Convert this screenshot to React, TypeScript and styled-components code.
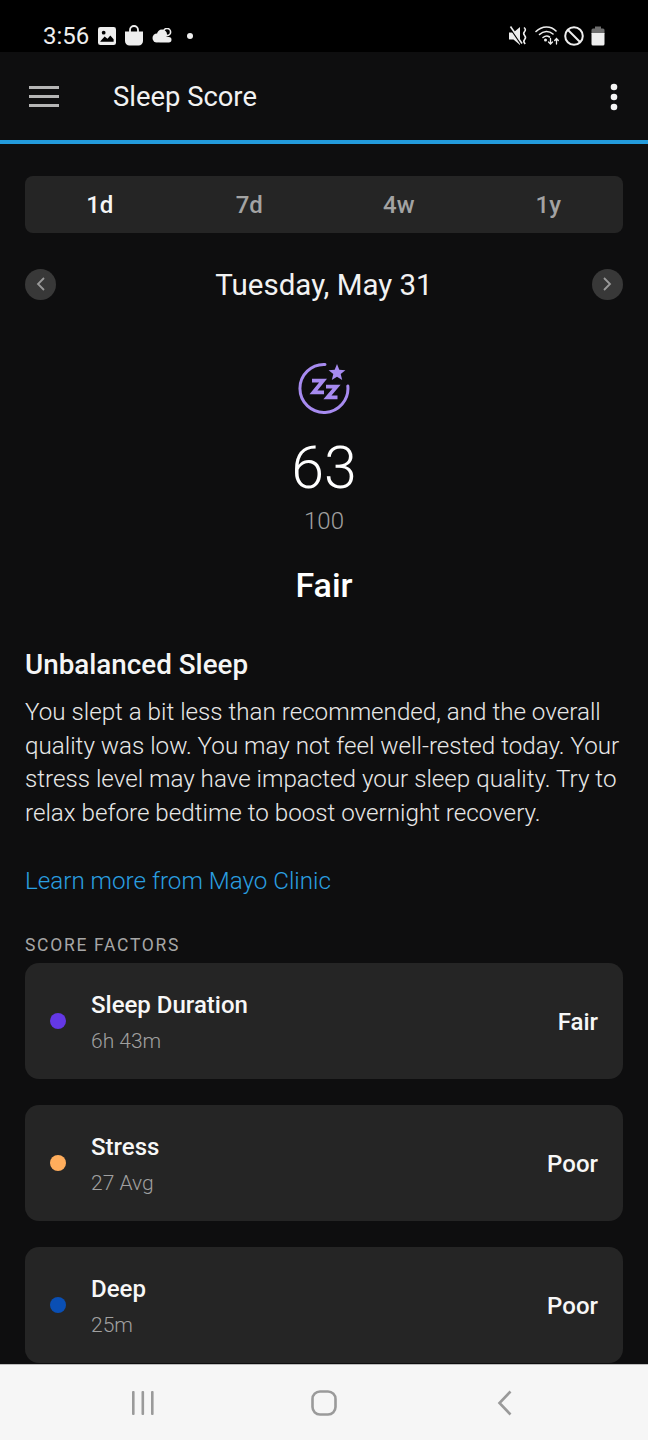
import { FC } from 'react';
import styled, { createGlobalStyle } from 'styled-components';

const GlobalStyle = createGlobalStyle`
  html, body {
    margin: 0;
    padding: 0;
    background: #0e0e0f;
  }
  * {
    box-sizing: border-box;
  }
`;

const Screen = styled.div`
  display: flex;
  flex-flow: column nowrap;
  width: 648px;
  height: 1440px;
  overflow: hidden;
  background: #0e0e0f;
  color: #ffffff;
  font-family: Roboto, 'Liberation Sans', sans-serif;
`;

const StatusBar = styled.div`
  display: flex;
  align-items: center;
  justify-content: space-between;
  flex: 0 0 52px;
  padding: 0 43px 0 43px;
  background: #000000;
  color: #eeeeee;
`;

const StatusGroup = styled.div`
  display: flex;
  align-items: center;
  gap: 8px;
  padding-top: 19px;
`;

const Time = styled.span`
  font-size: 24px;
  line-height: 32px;
  font-weight: 400;
  margin-right: 1px;
`;

const AppBar = styled.header`
  display: flex;
  align-items: center;
  flex: 0 0 92px;
  padding: 1px 30px 0 29px;
  border-bottom: 4px solid #239bdc;
`;

const Title = styled.h1`
  flex: 1;
  margin: 0 0 0 54px;
  font-size: 27.4px;
  line-height: 34px;
  font-weight: 400;
  color: #f2f2f2;
`;

const Content = styled.main`
  flex: 1;
  min-height: 0;
  overflow: hidden;
  padding: 32px 25px 0;
`;

const Tabs = styled.div`
  display: grid;
  grid-template-columns: repeat(4, 1fr);
  height: 57px;
  border-radius: 8px;
  background: #252525;
`;

const Tab = styled.div<{ $active?: boolean }>`
  display: flex;
  align-items: center;
  justify-content: center;
  font-size: 24px;
  font-weight: 500;
  color: ${(p) => (p.$active ? '#f5f5f5' : '#a3a3a3')};
`;

const DateRow = styled.div`
  display: flex;
  align-items: center;
  justify-content: space-between;
  height: 32px;
  margin-top: 35px;
`;

const DateLabel = styled.span`
  padding-top: 1px;
  font-size: 29.5px;
  line-height: 34px;
  font-weight: 400;
  color: #f2f2f2;
`;

const RoundButton = styled.div`
  display: flex;
  align-items: center;
  justify-content: center;
  width: 31px;
  height: 31px;
  border-radius: 50%;
  background: #383838;
`;

const ScoreBlock = styled.section`
  display: flex;
  flex-flow: column nowrap;
  align-items: center;
  margin-top: 62px;
`;

const ScoreValue = styled.div`
  margin-top: 19px;
  font-size: 59px;
  line-height: 70px;
  font-weight: 300;
`;

const ScoreMax = styled.div`
  margin-top: 2px;
  font-size: 24px;
  line-height: 32px;
  font-weight: 300;
  color: #a0a0a0;
`;

const ScoreLabel = styled.div`
  margin-top: 28px;
  font-size: 34px;
  line-height: 40px;
  font-weight: 500;
`;

const Heading = styled.h2`
  margin: 43px 0 0;
  font-size: 27.8px;
  line-height: 34px;
  font-weight: 500;
  color: #f5f5f5;
`;

const Body = styled.p`
  margin: 14px 0 0;
  font-size: 24.2px;
  line-height: 33.6px;
  font-weight: 300;
  color: #e8e8e8;
`;

const LearnMore = styled.a`
  display: block;
  margin-top: 34px;
  font-size: 24.2px;
  line-height: 34px;
  font-weight: 300;
  color: #2a9fe0;
`;

const SectionLabel = styled.div`
  margin-top: 37px;
  font-size: 17.5px;
  line-height: 20px;
  font-weight: 400;
  letter-spacing: 1.7px;
  color: #a6a6a6;
`;

const FactorList = styled.div`
  display: flex;
  flex-flow: column nowrap;
  gap: 26px;
  margin-top: 8px;
`;

const FactorCard = styled.div`
  display: flex;
  align-items: center;
  flex: 0 0 116px;
  padding: 0 25px;
  border-radius: 14px;
  background: #252525;
`;

const Dot = styled.span<{ $color: string }>`
  flex: 0 0 16px;
  height: 16px;
  border-radius: 50%;
  background: ${(p) => p.$color};
`;

const FactorText = styled.div`
  display: flex;
  flex-flow: column nowrap;
  flex: 1;
  gap: 5px;
  margin: 4px 0 0 25px;
`;

const FactorName = styled.span`
  font-size: 24px;
  line-height: 31px;
  font-weight: 500;
  color: #f7f7f7;
`;

const FactorDetail = styled.span`
  font-size: 21px;
  line-height: 30px;
  font-weight: 300;
  color: #a0a0a0;
`;

const FactorRating = styled.span`
  margin-top: 2px;
  font-size: 24px;
  line-height: 30px;
  font-weight: 500;
  color: #f7f7f7;
`;

const NavBar = styled.nav`
  display: grid;
  grid-template-columns: repeat(3, 181px);
  justify-content: center;
  justify-items: center;
  align-items: center;
  flex: 0 0 76px;
  border-top: 1px solid #bdbdbd;
  background: #f6f6f6;
`;

const MuteSvg = styled.svg`
  margin-right: -1px;
`;

const WifiSvg = styled.svg`
  margin-right: -4px;
`;

const BlockSvg = styled.svg`
  margin-right: -1px;
`;

const Hamburger = () => (
  <svg width="30" height="22" viewBox="0 0 30 22" fill="#b5b5b5">
    <rect y="0" width="30" height="3" />
    <rect y="9" width="30" height="3" />
    <rect y="18" width="30" height="3" />
  </svg>
);

const Kebab = () => (
  <svg width="8" height="28" viewBox="0 0 8 28" fill="#f5f5f5">
    <circle cx="4" cy="4" r="3.3" />
    <circle cx="4" cy="14" r="3.3" />
    <circle cx="4" cy="24" r="3.3" />
  </svg>
);

const ImageIcon = () => (
  <svg width="18" height="18" viewBox="0 0 19 19">
    <rect width="19" height="19" rx="2.5" fill="#eeeeee" />
    <circle cx="6" cy="6" r="2" fill="#000" />
    <path d="M2.5 15 L7 10 L10 12.5 L13 9 L16.5 13 V15.5 H2.5 Z" fill="#000" />
  </svg>
);

const BagIcon = () => (
  <svg width="20" height="21" viewBox="0 0 20 21">
    <path d="M6 7 V5 a4 4 0 0 1 8 0 V7" fill="none" stroke="#eee" strokeWidth="1.8" />
    <path d="M1 6.5 H19 V16 a4.5 4.5 0 0 1 -4.5 4.5 H5.5 A4.5 4.5 0 0 1 1 16 Z" fill="#eee" />
  </svg>
);

const CloudIcon = () => (
  <svg width="20" height="15" viewBox="0 0 20 15" fill="#eee">
    <circle cx="5" cy="10" r="4.5" />
    <circle cx="10" cy="6.5" r="5" />
    <rect x="5" y="9" width="14.5" height="5.5" rx="2.7" />
    <circle cx="15" cy="4" r="3.6" fill="none" stroke="#eee" strokeWidth="1.6" />
  </svg>
);

const MuteIcon = () => (
  <MuteSvg width="19" height="20" viewBox="0 0 19 20" fill="none">
    <path d="M0 6.5 H4.5 L11 1 V19 L4.5 13.5 H0 Z" fill="#eee" />
    <path d="M0.5 1 L12 18" stroke="#000" strokeWidth="1.6" />
    <path d="M1.5 0.5 L13 17.5" stroke="#eee" strokeWidth="1.6" />
    <path d="M15 1.5 q2.4 2 0.6 4 q-1.8 2 0 4 q1.8 2 0 4 q-1.8 2 0.6 4.5" stroke="#eee" strokeWidth="1.6" />
  </MuteSvg>
);

const WifiIcon = () => (
  <WifiSvg width="25" height="19" viewBox="0 0 25 19" fill="none" stroke="#eee" strokeWidth="1.6" strokeLinecap="round">
    <path d="M1 5.5 C7 -0.5 16 -0.5 21 5" />
    <path d="M4.5 8.5 C8.5 4.5 14 4.5 18 8" />
    <path d="M8 11.5 C10.5 9.5 12.5 9.5 14.5 11" />
    <circle cx="10.5" cy="14" r="0.7" fill="#eee" />
    <path d="M15.5 12.5 V18 M13.5 16 L15.5 18 L17.5 16" strokeWidth="1.3" />
    <path d="M21.5 18 V12.5 M19.7 14.5 L21.5 12.5 L23.3 14.5" strokeWidth="1.3" />
  </WifiSvg>
);

const BlockIcon = () => (
  <BlockSvg width="20" height="20" viewBox="0 0 20 20" fill="none" stroke="#eee" strokeWidth="2">
    <circle cx="10" cy="10" r="8.8" />
    <path d="M4 4 L16 16" />
  </BlockSvg>
);

const BatteryIcon = () => (
  <svg width="14" height="20" viewBox="0 0 14 20">
    <path d="M4 0.5 H10 V2.5 H12 a1.5 1.5 0 0 1 1.5 1.5 V8 H0.5 V4 A1.5 1.5 0 0 1 2 2.5 H4 Z" fill="#6e6e6e" />
    <path d="M0.5 7 H13.5 V18 a1.5 1.5 0 0 1 -1.5 1.5 H2 A1.5 1.5 0 0 1 0.5 18 Z" fill="#eee" />
  </svg>
);

const SleepIcon = () => (
  <svg width="52" height="52" viewBox="0 0 52 52" fill="none">
    <path d="M27 2.5 A24 24 0 1 0 49.8 24" stroke="#a78bf0" strokeWidth="3" strokeLinecap="round" />
    <path d="M39 2 L41.3 7.8 L47.4 8.2 L42.7 12.1 L44.2 18 L39 14.7 L33.8 18 L35.3 12.1 L30.6 8.2 L36.7 7.8 Z" fill="#a78bf0" />
    <path d="M14 18.7 H25 L15.5 30.3 H26" stroke="#a78bf0" strokeWidth="3.8" />
    <path d="M28 24.7 H38.5 L29.5 35.3 H39.5" stroke="#a78bf0" strokeWidth="3.8" />
  </svg>
);

const Chevron: FC<{ dir: 'left' | 'right' }> = ({ dir }) => (
  <svg width="10" height="14" viewBox="0 0 10 14" fill="none" stroke="#9a9a9a" strokeWidth="1.8">
    <path d={dir === 'left' ? 'M8 1 L2 7 L8 13' : 'M2 1 L8 7 L2 13'} />
  </svg>
);

const factors = [
  { name: 'Sleep Duration', detail: '6h 43m', rating: 'Fair', color: '#6438e6' },
  { name: 'Stress', detail: '27 Avg', rating: 'Poor', color: '#ffad5c' },
  { name: 'Deep', detail: '25m', rating: 'Poor', color: '#0a4fb4' },
];

const App: FC = () => (
  <Screen>
    <GlobalStyle />
    <StatusBar>
      <StatusGroup>
        <Time>3:56</Time>
        <ImageIcon />
        <BagIcon />
        <CloudIcon />
        <svg width="16" height="8" viewBox="0 0 16 8" fill="#eee">
          <circle cx="10" cy="4" r="3" />
        </svg>
      </StatusGroup>
      <StatusGroup>
        <MuteIcon />
        <WifiIcon />
        <BlockIcon />
        <BatteryIcon />
      </StatusGroup>
    </StatusBar>
    <AppBar>
      <Hamburger />
      <Title>Sleep Score</Title>
      <Kebab />
    </AppBar>
    <Content>
      <Tabs>
        <Tab $active>1d</Tab>
        <Tab>7d</Tab>
        <Tab>4w</Tab>
        <Tab>1y</Tab>
      </Tabs>
      <DateRow>
        <RoundButton>
          <Chevron dir="left" />
        </RoundButton>
        <DateLabel>Tuesday, May 31</DateLabel>
        <RoundButton>
          <Chevron dir="right" />
        </RoundButton>
      </DateRow>
      <ScoreBlock>
        <SleepIcon />
        <ScoreValue>63</ScoreValue>
        <ScoreMax>100</ScoreMax>
        <ScoreLabel>Fair</ScoreLabel>
      </ScoreBlock>
      <Heading>Unbalanced Sleep</Heading>
      <Body>
        You slept a bit less than recommended, and the overall quality was low. You may not feel
        well-rested today. Your stress level may have impacted your sleep quality. Try to relax
        before bedtime to boost overnight recovery.
      </Body>
      <LearnMore>Learn more from Mayo Clinic</LearnMore>
      <SectionLabel>SCORE FACTORS</SectionLabel>
      <FactorList>
        {factors.map((factor) => (
          <FactorCard key={factor.name}>
            <Dot $color={factor.color} />
            <FactorText>
              <FactorName>{factor.name}</FactorName>
              <FactorDetail>{factor.detail}</FactorDetail>
            </FactorText>
            <FactorRating>{factor.rating}</FactorRating>
          </FactorCard>
        ))}
      </FactorList>
    </Content>
    <NavBar>
      <svg width="24" height="24" viewBox="0 0 24 24" fill="#9a9a9a">
        <rect x="1" y="0" width="2.6" height="24" rx="1" />
        <rect x="10.5" y="0" width="2.6" height="24" rx="1" />
        <rect x="20" y="0" width="2.6" height="24" rx="1" />
      </svg>
      <svg width="26" height="26" viewBox="0 0 26 26" fill="none" stroke="#9a9a9a" strokeWidth="2.6">
        <rect x="1.5" y="1.5" width="23" height="23" rx="7.5" />
      </svg>
      <svg width="16" height="26" viewBox="0 0 16 26" fill="none" stroke="#9a9a9a" strokeWidth="2.6">
        <path d="M13.5 1.5 L2.5 13 L13.5 24.5" />
      </svg>
    </NavBar>
  </Screen>
);

export default App;
